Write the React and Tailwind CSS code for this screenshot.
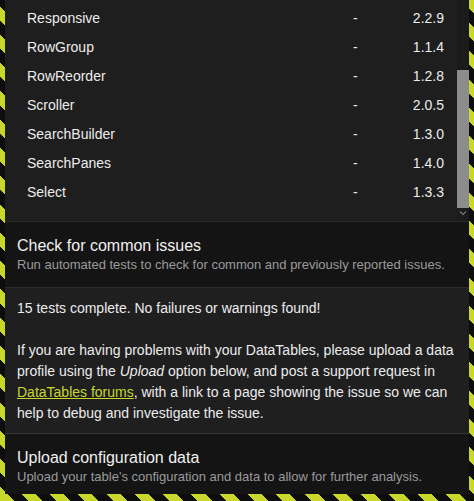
import React from 'react';

const libs = [
    { name: 'Responsive', version: '2.2.9' },
    { name: 'RowGroup', version: '1.1.4' },
    { name: 'RowReorder', version: '1.2.8' },
    { name: 'Scroller', version: '2.0.5' },
    { name: 'SearchBuilder', version: '1.3.0' },
    { name: 'SearchPanes', version: '1.4.0' },
    { name: 'Select', version: '1.3.3' },
];

const SectionHeader = ({ title, subtitle }) => (
    <div className="bg-[#141414] px-[12px] pt-[14px] pb-[14px]">
        <h3 className="text-[16px] leading-[20px] text-[#f0f0f0]">{title}</h3>
        <p className="text-[13px] leading-[17px] text-[#9b9b9b]">{subtitle}</p>
    </div>
);

const App = () => {
    return (
        <div
            className="w-[474px] h-[501px] overflow-hidden pl-[5px] pr-[5px] pb-[7px] bg-[repeating-linear-gradient(45deg,#c9d72c_0px,#c9d72c_10px,#0d0d0d_10px,#0d0d0d_20px)]"
            style={{ fontFamily: '"Liberation Sans", Arial, sans-serif' }}
        >
            <div className="h-full overflow-hidden flex flex-col bg-[#1c1c1c]">
                {/* library list, scrolled */}
                <div className="h-[221px] shrink-0 flex bg-[#1e1e1e]">
                    <div className="flex-1 pt-[4px] pl-[22px] pr-[13px]">
                        {libs.map((lib) => (
                            <div key={lib.name} className="h-[29px] flex items-center text-[14px] text-[#ececec]">
                                <span className="w-[326px]">{lib.name}</span>
                                <span className="w-[20px]">-</span>
                                <span className="flex-1 text-right">{lib.version}</span>
                            </div>
                        ))}
                    </div>
                    <div className="w-[12px] relative bg-[#1b1b1b]">
                        <div className="absolute left-0 right-0 top-[70px] h-[138px] bg-[#8c8c8c]" />
                        <svg className="absolute left-[2px] top-[210px]" width="8" height="6" viewBox="0 0 8 6">
                            <path d="M1 1.5 L4 4.5 L7 1.5" fill="none" stroke="#777" strokeWidth="1.2" />
                        </svg>
                    </div>
                </div>

                <div className="shrink-0 border-t border-[#2a2a2a]">
                    <SectionHeader
                        title="Check for common issues"
                        subtitle="Run automated tests to check for common and previously reported issues."
                    />
                </div>

                <div className="shrink-0 border-t border-[#2b2b2b] bg-[#1f1f1f] px-[12px] pt-[10px] pb-[9px] text-[14px] leading-[21px] text-[#ececec]">
                    <p>15 tests complete. No failures or warnings found!</p>
                    <p className="mt-[21px]">
                        If you are having problems with your DataTables, please upload a data profile using the{' '}
                        <em>Upload</em> option below, and post a support request in{' '}
                        <a href="#" className="text-[#c9d72c] underline">DataTables forums</a>, with a link to a page
                        showing the issue so we can help to debug and investigate the issue.
                    </p>
                </div>

                <div className="shrink-0 border-t border-[#363636] bg-[#141414]">
                    <SectionHeader
                        title="Upload configuration data"
                        subtitle="Upload your table's configuration and data to allow for further analysis."
                    />
                </div>
            </div>
        </div>
    );
};

export default App;
